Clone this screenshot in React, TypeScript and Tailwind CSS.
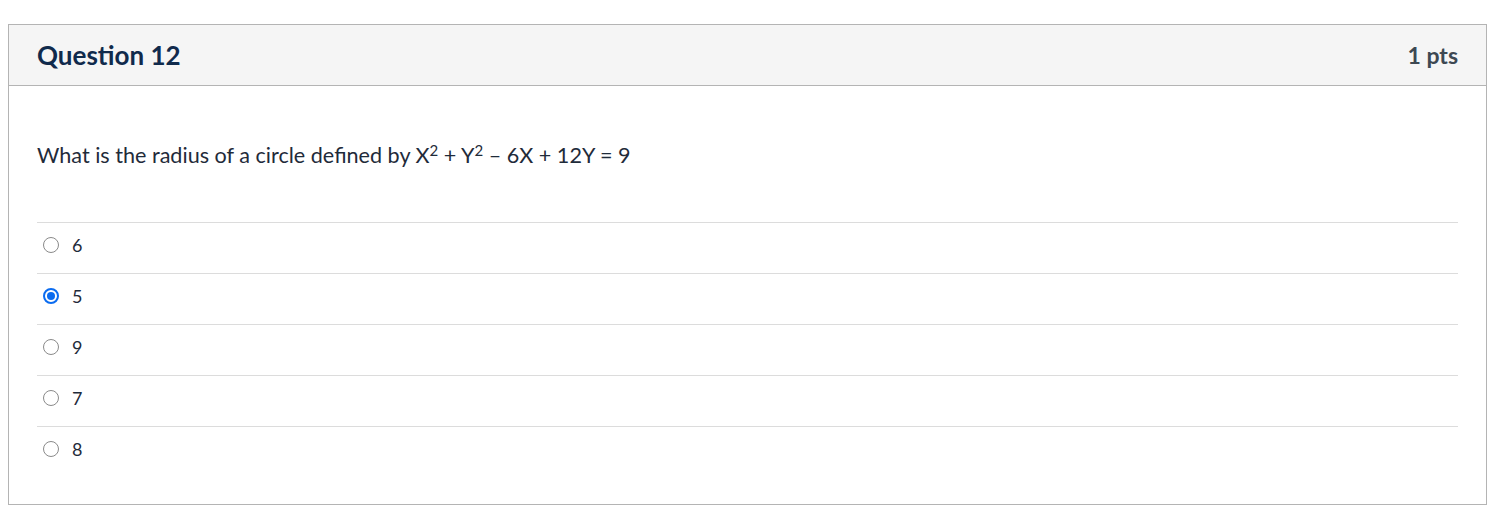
import { useState } from "react";

const answers = ["6", "5", "9", "7", "8"];

function Radio({ checked }: { checked: boolean }) {
  if (checked) {
    return (
      <span className="flex h-[16px] w-[16px] items-center justify-center rounded-full border-2 border-[#0b6cf0] bg-white">
        <span className="h-[8px] w-[8px] rounded-full bg-[#0b6cf0]" />
      </span>
    );
  }
  return <span className="h-[16px] w-[16px] rounded-full border-[1.5px] border-[#8a8a8a] bg-white" />;
}

export default function App() {
  const [selected, setSelected] = useState("5");

  return (
    <div className="min-h-[519px] bg-white pt-[24px] pl-[8px] pr-[20px]" style={{ fontFamily: "Lato, 'Liberation Sans', sans-serif" }}>
      <div className="w-[1479px] border border-[#b4b4b4]">
        <div className="flex h-[61px] items-center justify-between border-b border-[#b4b4b4] bg-[#f5f5f5] px-[28px]">
          <h3 className="text-[26px] font-bold text-[#102a4c]">Question 12</h3>
          <span className="text-[23px] font-bold text-[#3d4852]">1 pts</span>
        </div>
        <div className="px-[28px] pt-[55px] pb-[27px]">
          <p className="text-[21.6px] leading-[28px] text-[#1f2b3a]">
            What is the radius of a circle defined by X<sup className="text-[15px] leading-none">2</sup> + Y
            <sup className="text-[15px] leading-none">2</sup> – 6X + 12Y = 9
          </p>
          <div className="mt-[53px]">
            {answers.map((a) => (
              <label
                key={a}
                onClick={() => setSelected(a)}
                className="flex h-[51px] cursor-pointer items-start border-t border-[#dcdcdc] pt-[14px] pl-[6px]"
              >
                <span className="flex h-[16px] items-center gap-[13px]">
                  <Radio checked={selected === a} />
                  <span className="text-[18px] leading-[22px] text-[#1f2b3a]">{a}</span>
                </span>
              </label>
            ))}
          </div>
        </div>
      </div>
    </div>
  );
}
